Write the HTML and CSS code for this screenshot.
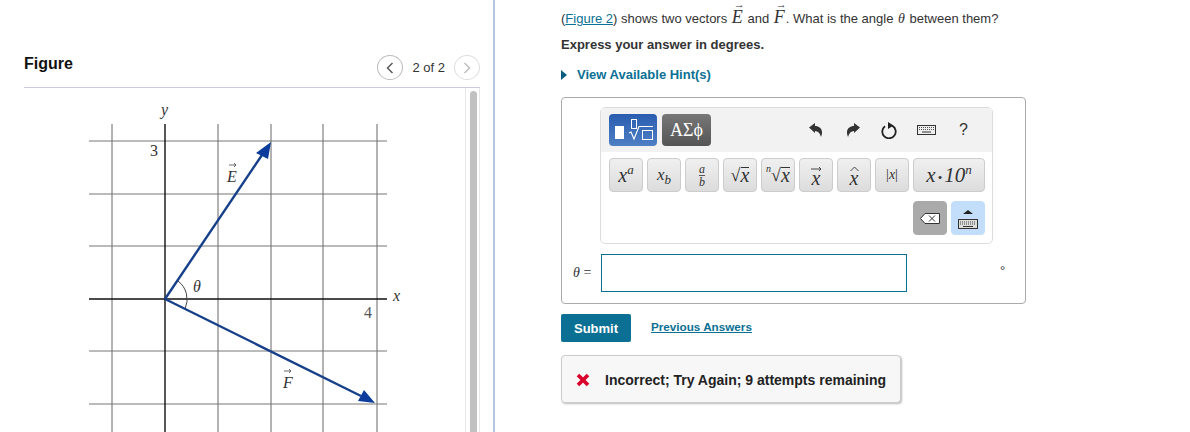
FILE: index.html
```html
<!DOCTYPE html>
<html lang="en">
<head>
    <meta charset="UTF-8">
    <meta name="viewport" content="width=device-width, initial-scale=1.0">
    <title>Angle between vectors</title>
    <link rel="stylesheet" href="styles.css">
</head>
<body>
<div class="page">
    <div class="left">
        <div class="fig-head">
            <h2 class="fig-title">Figure</h2>
            <div class="pager">
                <button class="pager-btn">
                    <svg width="8" height="12" viewBox="0 0 8 12"><path d="M6.5 1 1.5 6l5 5" fill="none" stroke="#555" stroke-width="1.4"/></svg>
                </button>
                <span class="pager-text">2 of 2</span>
                <button class="pager-btn off">
                    <svg width="8" height="12" viewBox="0 0 8 12"><path d="M1.5 1l5 5-5 5" fill="none" stroke="#bbb" stroke-width="1.4"/></svg>
                </button>
            </div>
        </div>
        <div class="fig-body">
            <svg class="graph" width="441" height="344" viewBox="24 88 441 344">
                <g stroke="#666" stroke-width="1">
                    <path d="M112 124V432M218 124V432M271 124V432M323 124V432M377 124V432"/>
                    <path d="M89 141H387M89 194H387M89 246H387M89 351H387M89 404H387" stroke="#777"/>
                </g>
                <path d="M165 124V432M89 299H387" stroke="#111" stroke-width="1.4" fill="none"/>
                <path d="M178 281A23 23 0 0 1 185 309" fill="none" stroke="#444" stroke-width="1"/>
                <path d="M165 299 264 152M165 299 361 396" stroke="#17408b" stroke-width="2.4" fill="none"/>
                <path d="M271 142 256 153 268 159Z M375 403 358 401 364 390Z" fill="#0c3c9c"/>
                <path d="M229 165H236M234 163l2 2-2 2M284 371H291M289 369l2 2-2 2" fill="none" stroke="#444" stroke-width=".8"/>
                <g class="graph-label">
                    <text x="161" y="115" font-style="italic">y</text>
                    <text x="150" y="156">3</text>
                    <text x="227" y="182" font-style="italic">E</text>
                    <text x="283" y="388" font-style="italic">F</text>
                    <text x="193" y="292" font-style="italic">θ</text>
                    <text x="364" y="318" fill="#555">4</text>
                    <text x="393" y="301" font-style="italic">x</text>
                </g>
            </svg>
            <div class="scroll-track"><div class="scroll-thumb"></div></div>
        </div>
    </div>

    <div class="right">
        <p class="question">(<a href="#">Figure 2</a>) shows two vectors <span class="vec">E</span> and <span class="vec">F</span>. What is the angle <i class="theta">θ</i> between them?</p>
        <p class="express">Express your answer in degrees.</p>
        <p class="hint"><span class="hint-arrow"></span>View Available Hint(s)</p>

        <div class="answer">
            <div class="toolbox">
                <div class="tool-top">
                    <div class="tabs">
                        <button class="tab tab-blue">
                            <svg width="48" height="32" viewBox="0 0 48 32">
                                <rect x="6" y="12" width="9" height="13" fill="#fff"/>
                                <rect x="22.500" y="5.500" width="5" height="9" fill="none" stroke="#fff"/>
                                <path d="M20 19l2-1 3 7 5-12.500H44" fill="none" stroke="#fff" stroke-width="1.100"/>
                                <rect x="33.500" y="16.500" width="10" height="9" fill="none" stroke="#fff"/>
                            </svg>
                        </button>
                        <button class="tab tab-gray">ΑΣϕ</button>
                    </div>
                    <div class="actions">
                        <span class="act"><svg width="14" height="14" viewBox="0 0 14 14"><path d="M0 4.500 6 0V3C11 3 15 7 12 14 11 10 9 8 6 8V10Z" fill="#333"/></svg></span>
                        <span class="act"><svg width="14" height="14" viewBox="0 0 14 14"><path d="M14 4.500 8 0V3C3 3 -1 7 2 14 3 10 5 8 8 8V10Z" fill="#333"/></svg></span>
                        <span class="act"><svg width="17" height="17" viewBox="0 0 17 17"><path d="M11 3.600A6.700 6.700 0 1 1 4 4.200" fill="none" stroke="#222" stroke-width="1.800"/><path d="M7 0l5.500 3.500L7 7Z" fill="#222"/></svg></span>
                        <span class="act"><svg width="19" height="10" viewBox="0 0 19 10"><rect x=".5" y=".5" width="18" height="9" fill="#eee" stroke="#333"/><path d="M2 2.500h15M2 4.500h15" stroke="#555" stroke-dasharray="1 1"/><path d="M5 7h9" stroke="#333"/></svg></span>
                        <span class="act act-q">?</span>
                    </div>
                </div>
                <div class="tool-row">
                    <button class="key key-lg"><span><i>x</i><sup>a</sup></span></button>
                    <button class="key"><span><i>x</i><sub>b</sub></span></button>
                    <button class="key"><span class="frac"><i>a</i><i>b</i></span></button>
                    <button class="key key-lg"><span class="rad">√</span><i class="over">x</i></button>
                    <button class="key key-lg"><sup class="nroot">n</sup><span class="rad">√</span><i class="over">x</i></button>
                    <button class="key key-lg"><span class="accent">
                        <svg width="11" height="6" viewBox="0 0 11 6"><path d="M0 3H10M8 1l2 2-2 2" fill="none" stroke="#333" stroke-width=".9"/></svg>
                        <i>x</i></span></button>
                    <button class="key key-lg"><span class="accent">
                        <svg width="9" height="6" viewBox="0 0 9 6"><path d="M.5 5 4.500 1 8.500 5" fill="none" stroke="#333" stroke-width=".9"/></svg>
                        <i>x</i></span></button>
                    <button class="key small">|<i>x</i>|</button>
                    <button class="key wide"><span><i>x</i><small class="dot">•</small><i>10</i><sup>n</sup></span></button>
                </div>
                <div class="tool-row end">
                    <button class="key key-del">
                        <svg width="20" height="11" viewBox="0 0 20 11"><path d="M5 .5H19.500V10.500H5L.5 5.500Z" fill="#fff" stroke="#333"/><path d="M9 2.500l6 6M15 2.500l-6 6" stroke="#333"/></svg>
                    </button>
                    <button class="key key-kb">
                        <svg width="20" height="22" viewBox="0 0 20 22"><path d="M5 7 10 3l5 4Z" fill="#222"/><rect x=".5" y="12.500" width="19" height="9" fill="#ddd" stroke="#333"/><path d="M2 15h16M2 17h16" stroke="#444" stroke-dasharray="1 1"/><path d="M5 19.500h10" stroke="#333"/></svg>
                    </button>
                </div>
            </div>
            <div class="entry">
                <span class="entry-label"><i>θ</i> =</span>
                <div class="entry-input"></div>
                <span class="entry-unit">°</span>
            </div>
        </div>

        <div class="submit-row">
            <button class="submit">Submit</button>
            <a class="prev" href="#">Previous Answers</a>
        </div>

        <div class="result">
            <svg width="14" height="14" viewBox="0 0 14 14"><path d="M2 2 12 12M12 2 2 12" stroke="#d9042b" stroke-width="3.800"/></svg>
            <span>Incorrect; Try Again; 9 attempts remaining</span>
        </div>
    </div>
</div>
</body>
</html>
```

FILE: styles.css
```css
body {
    margin: 0;
    font-family: "Liberation Sans", Arial, sans-serif;
    background: #fff;
    color: #333;
    overflow: hidden;
}

.page {
    display: flex;
    height: 432px;
    overflow: hidden;
}

/* left pane */
.left {
    width: 456px;
    padding: 0 13px 0 24px;
    border-right: 2px solid #b4c7e0;
}

.fig-head {
    height: 87px;
    display: flex;
    justify-content: space-between;
    align-items: flex-end;
    border-bottom: 1px solid #ccd;
}

.fig-title {
    margin: 0 0 13px;
    font-size: 16px;
    line-height: 20px;
    color: #111;
}

.pager {
    display: flex;
    align-items: center;
    gap: 9px;
    margin-bottom: 7px;
}

.pager-btn {
    width: 26px;
    height: 25px;
    padding: 0;
    border: 1px solid #bbb;
    border-radius: 50%;
    background: #fff;
    display: flex;
    align-items: center;
    justify-content: center;
}

.pager-btn.off {
    border-color: #ddd;
}

.pager-text {
    font-size: 13px;
    color: #333;
}

.fig-body {
    display: flex;
    height: 344px;
}

.graph {
    display: block;
    flex: none;
}

.graph-label {
    font-family: "Liberation Serif", serif;
    font-size: 16px;
    fill: #333;
}

.scroll-track {
    width: 15px;
    box-sizing: border-box;
    padding: 3px 2px 0 4px;
    border-left: 1px solid #e8e8e8;
    border-right: 1px solid #e8e8e8;
}

.scroll-thumb {
    height: 100%;
    background: #c1c1c1;
    border-radius: 4px 4px 0 0;
}

/* right pane */
.right {
    width: 465px;
    margin-left: 66px;
    font-size: 13px;
}

.question {
    margin: 8px 0 0;
    height: 20px;
    line-height: 20px;
    font-size: 13px;
}

.question a {
    color: #0b7094;
}

.vec {
    position: relative;
    font-family: "Liberation Serif", serif;
    font-style: italic;
    font-size: 18px;
    line-height: 1;
    padding: 0 1px 0 1px;
}

.vec::before {
    content: "→";
    position: absolute;
    left: 3px;
    top: -8px;
    font-size: 11px;
    font-style: normal;
}

.theta {
    font-family: "Liberation Serif", serif;
    font-size: 14px;
    line-height: 1;
    padding: 0 1px;
}

.express {
    margin: 9px 0 0;
    font-size: 13px;
    line-height: 16px;
    font-weight: bold;
}

.hint {
    margin: 14px 0 0;
    display: flex;
    align-items: center;
    line-height: 16px;
    font-size: 13px;
    font-weight: bold;
    color: #0b7094;
}

.hint-arrow {
    width: 0;
    height: 0;
    margin-right: 10px;
    border-left: 6px solid #0b5c7e;
    border-top: 5px solid transparent;
    border-bottom: 5px solid transparent;
}

.answer {
    margin-top: 14px;
    height: 207px;
    box-sizing: border-box;
    border: 1px solid #aaa;
    border-radius: 4px;
    padding: 9px 32px 0 38px;
}

.toolbox {
    width: 393px;
    height: 137px;
    box-sizing: border-box;
    border: 1px solid #ddd;
    border-radius: 5px;
}

.tool-top {
    height: 44px;
    padding: 6px 0 0 8px;
    box-sizing: border-box;
    background: #f2f2f2;
    display: flex;
    justify-content: space-between;
}

.tabs {
    display: flex;
    gap: 5px;
}

.tab {
    width: 48px;
    height: 32px;
    padding: 0;
    border: none;
    border-radius: 4px;
    display: flex;
    align-items: center;
    justify-content: center;
    color: #fff;
    font-family: "Liberation Serif", serif;
    font-size: 18px;
}

.tab-blue {
    background: linear-gradient(#2a5db0, #4f7fc4);
}

.tab-gray {
    width: 49px;
    background: linear-gradient(#777, #555);
}

.actions {
    display: flex;
    margin-right: 10px;
    height: 32px;
}

.act {
    width: 37px;
    display: flex;
    align-items: center;
    justify-content: center;
}

.act-q {
    font-size: 16px;
    color: #333;
}

.tool-row {
    display: flex;
    gap: 4px;
    padding: 6px 0 0 8px;
}

.tool-row.end {
    justify-content: flex-end;
    padding: 9px 7px 0 0;
}

.key {
    width: 34px;
    height: 34px;
    padding: 0;
    border: 1px solid #ccc;
    border-radius: 4px;
    background: linear-gradient(#f0f0f0, #dcdcdc);
    font-family: "Liberation Serif", serif;
    font-size: 17px;
    color: #333;
    display: flex;
    align-items: center;
    justify-content: center;
}

.key-lg {
    font-size: 20px;
}

.key sup,
.key sub {
    font-size: 13px;
    font-style: italic;
    line-height: 0;
}

.key.small {
    font-size: 14px;
}

.key.wide {
    width: 72px;
    font-size: 21px;
}

.dot {
    font-size: 13px;
    margin: 0 2px;
}

.frac {
    display: flex;
    flex-direction: column;
    font-size: 12px;
    line-height: 12px;
}

.frac i:first-child {
    border-bottom: 1px solid #555;
}

.rad {
    font-size: 18px;
}

.over {
    border-top: 1px solid #333;
    line-height: 15px;
}

.key .nroot {
    margin: -12px 0 0 0;
    font-size: 10px;
}

.accent {
    display: flex;
    flex-direction: column;
    align-items: center;
    line-height: 14px;
}

.accent svg {
    margin-bottom: -1px;
}

.key-del {
    background: #aaa;
    border-color: #aaa;
}

.key-kb {
    background: #c3defb;
    border-color: #c3defb;
}

.entry {
    display: flex;
    align-items: center;
    margin: 10px -32px 0 -27px;
}

.entry-label {
    width: 28px;
    font-size: 14px;
    white-space: nowrap;
    font-family: "Liberation Serif", serif;
}

.entry-input {
    width: 306px;
    height: 38px;
    box-sizing: border-box;
    border: 1px solid #0b7094;
}

.entry-unit {
    margin-left: 93px;
    margin-top: -6px;
    font-size: 13px;
}

.submit-row {
    display: flex;
    align-items: center;
    margin-top: 10px;
}

.submit {
    width: 70px;
    height: 28px;
    padding: 0;
    border: none;
    border-radius: 2px;
    background: #0b7094;
    color: #fff;
    font-family: "Liberation Sans", Arial, sans-serif;
    font-size: 13px;
    font-weight: bold;
}

.prev {
    margin: -4px 0 0 20px;
    font-size: 11.700px;
    font-weight: bold;
    color: #0b7094;
}

.result {
    width: 340px;
    height: 48px;
    margin-top: 13px;
    box-sizing: border-box;
    padding: 2px 0 0 14px;
    display: flex;
    align-items: center;
    gap: 15px;
    background: #f7f7f7;
    border: 1px solid #ccc;
    border-radius: 4px;
    box-shadow: 1px 1px 2px #bbb;
    font-size: 14px;
    font-weight: bold;
    color: #222;
}
```
